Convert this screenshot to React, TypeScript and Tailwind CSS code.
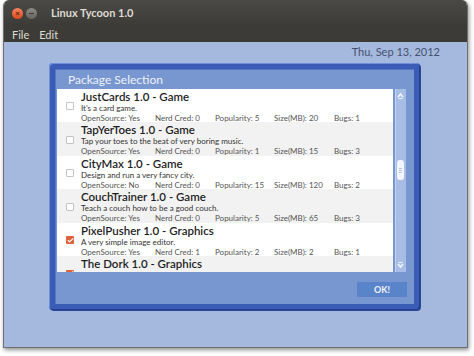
import { Check } from "lucide-react";

type Pkg = {
  name: string;
  description: string;
  openSource: string;
  nerdCred: number;
  popularity: number;
  size: number;
  bugs: number;
  selected: boolean;
};

const packages: Pkg[] = [
  { name: "JustCards 1.0 - Game", description: "It's a card game.", openSource: "Yes", nerdCred: 0, popularity: 5, size: 20, bugs: 1, selected: false },
  { name: "TapYerToes 1.0 - Game", description: "Tap your toes to the beat of very boring music.", openSource: "Yes", nerdCred: 0, popularity: 1, size: 15, bugs: 3, selected: false },
  { name: "CityMax 1.0 - Game", description: "Design and run a very fancy city.", openSource: "No", nerdCred: 0, popularity: 15, size: 120, bugs: 2, selected: false },
  { name: "CouchTrainer 1.0 - Game", description: "Teach a couch how to be a good couch.", openSource: "Yes", nerdCred: 0, popularity: 5, size: 65, bugs: 3, selected: false },
  { name: "PixelPusher 1.0 - Graphics", description: "A very simple image editor.", openSource: "Yes", nerdCred: 1, popularity: 2, size: 2, bugs: 1, selected: true },
  { name: "The Dork 1.0 - Graphics", description: "Draw pictures of dorks doing dorky things.", openSource: "Yes", nerdCred: 5, popularity: 3, size: 8, bugs: 4, selected: true },
];

export default function App() {
  return (
    <div className="h-[356px] w-[474px] overflow-hidden bg-white" style={{ fontFamily: "Lato, 'Open Sans', sans-serif" }}>
      <div className="ml-[3px] flex h-[348px] w-[465px] flex-col overflow-hidden rounded-t-[6px] border-x border-b border-[#6f6f6f] shadow-[1px_2px_4px_rgba(0,0,0,0.45)]">
        <div className="flex h-[26px] items-center bg-gradient-to-b from-[#4a4945] to-[#3c3b37] pl-[8px]">
          <span className="flex size-[11px] items-center justify-center rounded-full bg-gradient-to-b from-[#f7845a] to-[#d9471c] text-[8px] font-bold leading-none text-[#5a2010]">×</span>
          <span className="ml-[3px] flex size-[11px] items-center justify-center rounded-full bg-gradient-to-b from-[#8e8d88] to-[#64635e]">
            <span className="h-[1px] w-[5px] bg-[#3c3b37]" />
          </span>
          <span className="ml-[14px] text-[11px] font-bold text-[#dfdbd2]">Linux Tycoon 1.0</span>
        </div>
        <div className="flex h-[16px] items-center gap-[10px] bg-[#3c3b37] pl-[8px] text-[11px] leading-none text-[#dfdbd2]">
          <span>File</span>
          <span>Edit</span>
        </div>
        <div className="flex-1 bg-[#a5b9de]">
          <div className="pr-[27px] pt-[3px] text-right text-[11px] leading-[14px] text-[#44516d]">Thu, Sep 13, 2012</div>
          <div className="ml-[45px] mt-[4px] w-[371px] rounded-[4px] bg-[#3b5cb5] p-[6px] shadow-[inset_1px_1px_0_#6f90da,inset_-1px_-1px_0_#23418f,1px_1px_0_#2a4797]">
            <div className="flex h-[235px] flex-col bg-[#7896cf] shadow-[inset_1px_1px_0_#5576c2]">
              <div className="h-[20px] pl-[13px] pt-[4px] text-[12px] leading-[14px] text-[#eef2fb]">Package Selection</div>
              <div className="flex h-[183px] gap-[2px] pl-[2px]">
                <div className="h-full w-[336px] overflow-hidden bg-white">
                  {packages.map((pkg, i) => (
                    <PackageRow key={pkg.name} pkg={pkg} shaded={i % 2 === 1} />
                  ))}
                </div>
                <Scrollbar />
              </div>
              <div className="flex flex-1 items-start justify-end pr-[7px] pt-[10px]">
                <button type="button" className="h-[15px] w-[50px] bg-[#5a84c9] text-[9px] font-bold leading-none text-[#eef3fc]">OK!</button>
              </div>
            </div>
          </div>
        </div>
      </div>
    </div>
  );
}

function PackageRow({ pkg, shaded }: { pkg: Pkg; shaded: boolean }) {
  return (
    <div className={`flex shrink-0 items-start pt-[1px] ${shaded ? "h-[34px] bg-[#f2f2f2]" : "h-[33px] bg-white"}`}>
      <div className="flex w-[24px] justify-center self-center pl-[2px]">
        {pkg.selected ? (
          <span className="flex size-[8px] items-center justify-center rounded-[1px] bg-[#e0603a]">
            <Check className="size-[7px] text-white" strokeWidth={4} />
          </span>
        ) : (
          <span className="size-[8px] rounded-[1px] border border-[#c4c4c4] bg-white" />
        )}
      </div>
      <div className="flex flex-col">
        <span className="text-[11.5px] font-semibold leading-[14px] text-[#1e1e1e]">{pkg.name}</span>
        <span className="text-[8px] leading-[9px] text-[#333]">{pkg.description}</span>
        <div className="flex text-[8px] leading-[10px] text-[#555]">
          <span className="w-[74px]">OpenSource: {pkg.openSource}</span>
          <span className="w-[60px]">Nerd Cred: {pkg.nerdCred}</span>
          <span className="w-[59px]">Popularity: {pkg.popularity}</span>
          <span className="w-[60px]">Size(MB): {pkg.size}</span>
          <span>Bugs: {pkg.bugs}</span>
        </div>
      </div>
    </div>
  );
}

function Scrollbar() {
  return (
    <div className="flex h-full w-[11px] flex-col items-center bg-[#a8bde5] shadow-[inset_1px_0_0_#c3d2ee]">
      <svg width="7" height="8" viewBox="0 0 7 8" className="mt-[3px]">
        <path d="M1 5 L3.5 2 L6 5" fill="none" stroke="#f2f5fb" strokeWidth="1.6" />
        <rect x="1.5" y="6" width="4" height="1" fill="#f2f5fb" />
      </svg>
      <div className="mt-[60px] flex h-[20px] w-[7px] flex-col items-center justify-center gap-[1px] rounded-[3px] bg-[#f4f6fb]">
        <span className="h-[1px] w-[3px] bg-[#b9c4da]" />
        <span className="h-[1px] w-[3px] bg-[#b9c4da]" />
        <span className="h-[1px] w-[3px] bg-[#b9c4da]" />
      </div>
      <div className="flex-1" />
      <svg width="7" height="8" viewBox="0 0 7 8" className="mb-[3px]">
        <rect x="1.5" y="1" width="4" height="1" fill="#f2f5fb" />
        <path d="M1 3 L3.5 6 L6 3" fill="none" stroke="#f2f5fb" strokeWidth="1.6" />
      </svg>
    </div>
  );
}
